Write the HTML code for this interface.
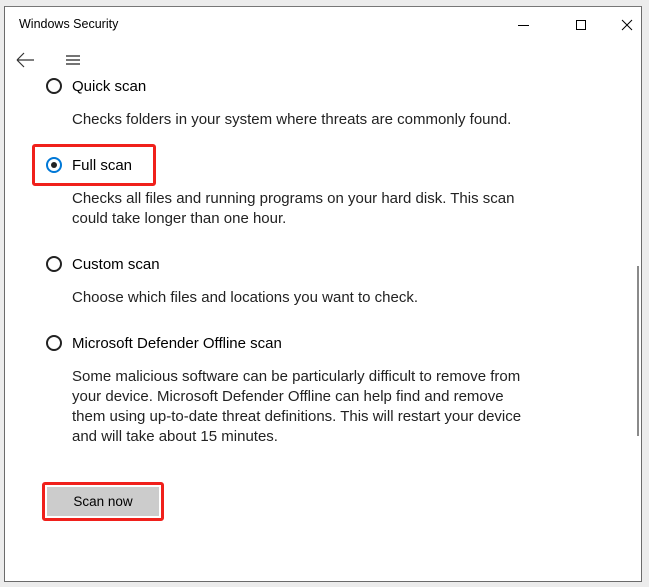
<!DOCTYPE html>
<html><head><style>
body{margin:0;width:649px;height:587px;background:#ececec;position:relative;overflow:hidden;font-family:"Liberation Sans",sans-serif;}
.win{position:absolute;left:4px;top:6px;width:636px;height:574px;background:#fff;border:1px solid #6b6b6b;border-top-color:#777;}
.t{position:absolute;white-space:nowrap;color:#000;}
.title{left:14px;top:10px;font-size:12.5px;}
.h{font-size:15px;}
.d{font-size:15px;color:#222;line-height:20px;}
.r{position:absolute;width:16px;height:16px;border:2px solid #222;border-radius:50%;box-sizing:border-box;}
.box{position:absolute;border:3px solid #f0201b;border-radius:3px;}
</style></head><body>
<div class="win">
<div class="t title">Windows Security</div>
<svg style="position:absolute;left:513px;top:12px" width="120" height="14">
<line x1="0" y1="6.5" x2="11" y2="6.5" stroke="#000" stroke-width="1"/>
<rect x="58.5" y="1.5" width="9" height="9" fill="none" stroke="#000"/>
<path d="M104 1l10 10M114 1l-10 10" stroke="#000" stroke-width="1"/>
</svg>
<svg style="position:absolute;left:11px;top:45px" width="70" height="16">
<path d="M1 8h17M1 8l7-7M1 8l7 7" stroke="#333" stroke-width="1.2" fill="none"/>
<path d="M50 4h14M50 8h14M50 12h14" stroke="#222" stroke-width="1.2"/>
</svg>
<div class="r" style="left:41px;top:71px"></div>
<div class="t h" style="left:67px;top:71px">Quick scan</div>
<div class="t d" style="left:67px;top:103px">Checks folders in your system where threats are commonly found.</div>
<div class="box" style="left:27px;top:137px;width:118px;height:36px"></div>
<div class="r" style="left:41px;top:150px;border-color:#0078d7;"><div style="position:absolute;left:3px;top:3px;width:6px;height:6px;border-radius:50%;background:#222"></div></div>
<div class="t h" style="left:67px;top:150px">Full scan</div>
<div class="t d" style="left:67px;top:182px">Checks all files and running programs on your hard disk. This scan<br>could take longer than one hour.</div>
<div class="r" style="left:41px;top:249px"></div>
<div class="t h" style="left:67px;top:249px">Custom scan</div>
<div class="t d" style="left:67px;top:281px">Choose which files and locations you want to check.</div>
<div class="r" style="left:41px;top:328px"></div>
<div class="t h" style="left:67px;top:328px">Microsoft Defender Offline scan</div>
<div class="t d" style="left:67px;top:360px">Some malicious software can be particularly difficult to remove from<br>your device. Microsoft Defender Offline can help find and remove<br>them using up-to-date threat definitions. This will restart your device<br>and will take about 15 minutes.</div>
<div style="position:absolute;left:37px;top:475px;width:122px;height:39px;background:#fff;border:3px solid #f0201b;border-radius:3px;box-sizing:border-box;">
<div style="position:absolute;left:2px;top:2px;right:2px;bottom:2px;background:#cccccc;font-size:13.5px;text-align:center;line-height:29px;">Scan now</div></div>
<div style="position:absolute;left:632px;top:259px;width:2px;height:170px;background:#8a8a8a"></div>
</div>
</body></html>
